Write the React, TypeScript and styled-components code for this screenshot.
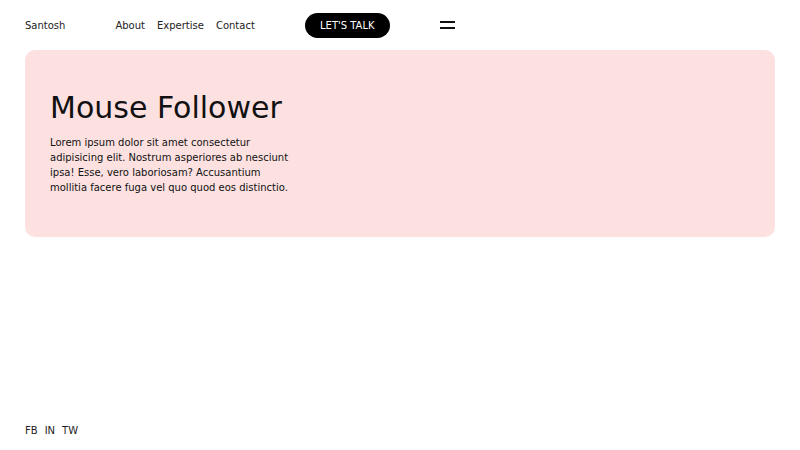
import React from 'react'
import styled, { createGlobalStyle } from 'styled-components'

const GlobalStyle = createGlobalStyle`
    html, body {
        margin: 0;
        padding: 0;
        background: #fff;
        font-family: "DejaVu Sans", sans-serif;
        color: #111;
    }
`

const Page = styled.div`
    min-height: 450px;
    display: flex;
    flex-direction: column;
    padding: 0 25px;
    box-sizing: border-box;
`

const Header = styled.header`
    height: 50px;
    display: flex;
    align-items: center;
    gap: 50px;
    font-size: 10px;
    color: #222;
`

const Brand = styled.div``

const NavLinks = styled.nav`
    display: flex;
    gap: 12px;
`

const NavLink = styled.a`
    color: #222;
    text-decoration: none;
`

const TalkButton = styled.button`
    background: #000;
    color: #fff;
    border: none;
    border-radius: 999px;
    height: 25px;
    width: 85px;
    font-family: inherit;
    font-size: 10px;
    padding: 0;
`

const Burger = styled.div`
    width: 15px;
    display: flex;
    flex-direction: column;
    gap: 4px;
    span {
        display: block;
        height: 2px;
        background: #111;
    }
`

const Hero = styled.section`
    background: #fde1e1;
    border-radius: 10px;
    padding: 38px 25px 42px;
    height: 187px;
    box-sizing: border-box;
`

const Title = styled.h1`
    margin: 0 0 7px;
    font-size: 30px;
    font-weight: 400;
    line-height: 40px;
`

const Text = styled.p`
    margin: 0;
    font-size: 10px;
    line-height: 15px;
    max-width: 245px;
`

const Footer = styled.footer`
    margin-top: auto;
    padding-bottom: 14px;
    display: flex;
    gap: 7px;
    font-size: 10px;
    color: #222;
`

export default function App() {
    return (
        <>
            <GlobalStyle />
            <Page>
                <Header>
                    <Brand>Santosh</Brand>
                    <NavLinks>
                        <NavLink href="#">About</NavLink>
                        <NavLink href="#">Expertise</NavLink>
                        <NavLink href="#">Contact</NavLink>
                    </NavLinks>
                    <TalkButton>LET'S TALK</TalkButton>
                    <Burger><span /><span /></Burger>
                </Header>
                <Hero>
                    <Title>Mouse Follower</Title>
                    <Text>
                        Lorem ipsum dolor sit amet consectetur adipisicing elit. Nostrum asperiores ab nesciunt
                        ipsa! Esse, vero laboriosam? Accusantium mollitia facere fuga vel quo quod eos distinctio.
                    </Text>
                </Hero>
                <Footer>
                    <span>FB</span>
                    <span>IN</span>
                    <span>TW</span>
                </Footer>
            </Page>
        </>
    )
}
